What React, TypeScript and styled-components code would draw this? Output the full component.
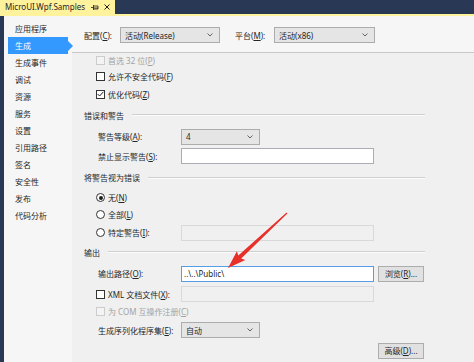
import React from "react";
import styled, { createGlobalStyle, css } from "styled-components";

const Global = createGlobalStyle`
  html, body { margin: 0; padding: 0; background: #293955; }
  body {
    font-family: "Noto Sans", "Noto Sans CJK SC", sans-serif;
    font-size: 8px;
    color: #262626;
  }
  * { box-sizing: border-box; }
`;

const Frame = styled.div`
  position: relative;
  width: 474px;
  height: 362px;
  overflow: hidden;
  background: #293955;
  display: flex;
  flex-direction: column;
`;

const TabStrip = styled.div`
  height: 14px;
  flex-shrink: 0;
  display: flex;
`;

const DocTab = styled.div`
  width: 115px;
  background: #fff29d;
  display: flex;
  align-items: center;
  padding-left: 5px;
  gap: 5px;
`;

const TabTitle = styled.span`
  flex: 1;
  white-space: nowrap;
  font-size: 8px;
  line-height: 14px;
  color: #262626;
`;

const TabIcons = styled.div`
  display: flex;
  align-items: center;
  gap: 5px;
  padding-right: 5px;
`;

const Accent = styled.div`
  height: 2px;
  flex-shrink: 0;
  background: #fff29d;
`;

const Body = styled.div`
  flex: 1;
  min-height: 0;
  display: flex;
  padding-left: 4px;
`;

const Sidebar = styled.nav`
  width: 68px;
  flex-shrink: 0;
  background: #f6f6f6;
  padding: 4px 0 0 4px;
  display: flex;
  flex-direction: column;
`;

const NavItem = styled.div<{ $active?: boolean }>`
  position: relative;
  height: 17px;
  width: 60px;
  display: flex;
  align-items: center;
  padding-left: 7px;
  white-space: nowrap;
  color: #262626;
  ${(p) =>
    p.$active &&
    css`
      background: #3399ff;
      color: #ffffff;
      &::after {
        content: "";
        position: absolute;
        right: -5px;
        top: 50%;
        margin-top: -5px;
        border-left: 5px solid #3399ff;
        border-top: 5px solid transparent;
        border-bottom: 5px solid transparent;
      }
    `}
`;

const Main = styled.main`
  flex: 1;
  min-width: 0;
  background: #f0f0f0;
  display: flex;
  flex-direction: column;
`;

const Header = styled.div`
  height: 37px;
  flex-shrink: 0;
  background: #f6f6f6;
  border-bottom: 1px solid #c9c9c9;
  display: flex;
  align-items: center;
  padding: 2px 0 0 12px;
`;

const Label = styled.span<{ $w?: number; $ml?: number; $disabled?: boolean }>`
  display: inline-block;
  flex-shrink: 0;
  white-space: nowrap;
  width: ${(p) => (p.$w ? `${p.$w}px` : "auto")};
  margin-left: ${(p) => p.$ml ?? 0}px;
  color: ${(p) => (p.$disabled ? "#a3a3a3" : "#262626")};
`;

const U = styled.u`
  text-decoration: underline;
  text-underline-offset: 1px;
`;

const Combo = styled.div<{ $w: number }>`
  width: ${(p) => p.$w}px;
  height: 16px;
  flex-shrink: 0;
  background: #e5e5e5;
  border: 1px solid #acacac;
  display: flex;
  align-items: center;
  justify-content: space-between;
  padding: 0 6px 0 4px;
  white-space: nowrap;
`;

const Content = styled.div`
  width: 353px;
  padding-left: 12px;
  display: flex;
  flex-direction: column;
`;

const Row = styled.div<{ $h: number; $indent?: number }>`
  height: ${(p) => p.$h}px;
  flex-shrink: 0;
  display: flex;
  align-items: center;
  padding-left: ${(p) => p.$indent ?? 0}px;
`;

const EndRow = styled(Row)`
  justify-content: flex-end;
  padding-right: 1px;
`;

const GroupTitle = styled.span`
  white-space: nowrap;
  color: #262626;
`;

const GroupRule = styled.div`
  flex: 1;
  height: 2px;
  margin-left: 8px;
  border-top: 1px solid #cfcfcf;
  border-bottom: 1px solid #fbfbfb;
`;

const Box = styled.span<{ $disabled?: boolean }>`
  width: 9px;
  height: 9px;
  flex-shrink: 0;
  background: ${(p) => (p.$disabled ? "#f4f4f4" : "#ffffff")};
  border: 1px solid ${(p) => (p.$disabled ? "#cccccc" : "#333333")};
  display: flex;
  align-items: center;
  justify-content: center;
  margin-right: 3px;
`;

const Radio = styled.span<{ $on?: boolean }>`
  width: 9px;
  height: 9px;
  flex-shrink: 0;
  border-radius: 50%;
  background: #ffffff;
  border: 1px solid #333333;
  display: flex;
  align-items: center;
  justify-content: center;
  margin-right: 3px;
  &::after {
    content: "";
    width: 4px;
    height: 4px;
    border-radius: 50%;
    background: ${(p) => (p.$on ? "#1e1e1e" : "transparent")};
  }
`;

const OptionLabel = styled.span<{ $w?: number }>`
  display: flex;
  align-items: center;
  flex-shrink: 0;
  width: ${(p) => (p.$w ? `${p.$w}px` : "auto")};
  white-space: nowrap;
`;

const TextBox = styled.div<{ $state?: "normal" | "focused" | "disabled" }>`
  width: 193px;
  height: 16px;
  flex-shrink: 0;
  display: flex;
  align-items: center;
  padding-left: 2px;
  white-space: nowrap;
  background: ${(p) => (p.$state === "disabled" ? "#f0f0f0" : "#ffffff")};
  border: 1px solid
    ${(p) =>
      p.$state === "focused"
        ? "#569de5"
        : p.$state === "disabled"
        ? "#d9d9d9"
        : "#abadb3"};
`;

const Button = styled.div`
  width: 46px;
  height: 16px;
  margin-left: 4px;
  flex-shrink: 0;
  background: #e1e1e1;
  border: 1px solid #adadad;
  display: flex;
  align-items: center;
  justify-content: center;
  white-space: nowrap;
`;

const Overlay = styled.svg`
  position: absolute;
  left: 0;
  top: 0;
  pointer-events: none;
`;

const Chevron = () => (
  <svg width="6" height="4" viewBox="0 0 6 4">
    <polyline points="0.5,0.5 3,3 5.5,0.5" fill="none" stroke="#555" strokeWidth="0.9" />
  </svg>
);

const Check = () => (
  <svg width="7" height="6" viewBox="0 0 7 6">
    <polyline points="0.6,3 2.6,5 6.4,0.8" fill="none" stroke="#1e1e1e" strokeWidth="1" />
  </svg>
);

const PinIcon = () => (
  <svg width="8" height="7" viewBox="0 0 8 7">
    <path d="M0 3.5H2.5 M2.5 1V6 M2.5 2H7V5H2.5 M2.5 4H7" fill="none" stroke="#1e1e1e" strokeWidth="0.8" />
  </svg>
);

const CloseIcon = () => (
  <svg width="6" height="6" viewBox="0 0 6 6">
    <path d="M0.5 0.5L5.5 5.5 M5.5 0.5L0.5 5.5" fill="none" stroke="#1e1e1e" strokeWidth="1" />
  </svg>
);

const navItems = [
  "应用程序",
  "生成",
  "生成事件",
  "调试",
  "资源",
  "服务",
  "设置",
  "引用路径",
  "签名",
  "安全性",
  "发布",
  "代码分析",
];

export default function App() {
  return (
    <>
      <Global />
      <Frame>
        <TabStrip>
          <DocTab>
            <TabTitle>MicroUI.Wpf.Samples</TabTitle>
            <TabIcons>
              <PinIcon />
              <CloseIcon />
            </TabIcons>
          </DocTab>
        </TabStrip>
        <Accent />
        <Body>
          <Sidebar>
            {navItems.map((n) => (
              <NavItem key={n} $active={n === "生成"}>
                {n}
              </NavItem>
            ))}
          </Sidebar>
          <Main>
            <Header>
              <Label $w={36}>
                配置(<U>C</U>):
              </Label>
              <Combo $w={100}>
                <span>活动(Release)</span>
                <Chevron />
              </Combo>
              <Label $w={39} $ml={15}>
                平台(<U>M</U>):
              </Label>
              <Combo $w={101}>
                <span>活动(x86)</span>
                <Chevron />
              </Combo>
            </Header>
            <Content>
              <Row $h={15} $indent={12}>
                <OptionLabel>
                  <Box $disabled />
                  <Label $disabled>
                    首选 32 位(<U>P</U>)
                  </Label>
                </OptionLabel>
              </Row>
              <Row $h={17} $indent={12}>
                <OptionLabel>
                  <Box />
                  <Label>
                    允许不安全代码(<U>F</U>)
                  </Label>
                </OptionLabel>
              </Row>
              <Row $h={18} $indent={12}>
                <OptionLabel>
                  <Box>
                    <Check />
                  </Box>
                  <Label>
                    优化代码(<U>Z</U>)
                  </Label>
                </OptionLabel>
              </Row>

              <Row $h={24}>
                <GroupTitle>错误和警告</GroupTitle>
                <GroupRule />
              </Row>
              <Row $h={19} $indent={14}>
                <Label $w={83}>
                  警告等级(<U>A</U>):
                </Label>
                <Combo $w={79}>
                  <span>4</span>
                  <Chevron />
                </Combo>
              </Row>
              <Row $h={20} $indent={14}>
                <Label $w={83}>
                  禁止显示警告(<U>S</U>):
                </Label>
                <TextBox />
              </Row>

              <Row $h={23}>
                <GroupTitle>将警告视为错误</GroupTitle>
                <GroupRule />
              </Row>
              <Row $h={17} $indent={12}>
                <OptionLabel>
                  <Radio $on />
                  <Label>
                    无(<U>N</U>)
                  </Label>
                </OptionLabel>
              </Row>
              <Row $h={17} $indent={12}>
                <OptionLabel>
                  <Radio />
                  <Label>
                    全部(<U>L</U>)
                  </Label>
                </OptionLabel>
              </Row>
              <Row $h={19} $indent={12}>
                <OptionLabel $w={85}>
                  <Radio />
                  <Label>
                    特定警告(<U>I</U>):
                  </Label>
                </OptionLabel>
                <TextBox $state="disabled" />
              </Row>

              <Row $h={20}>
                <GroupTitle>输出</GroupTitle>
                <GroupRule />
              </Row>
              <Row $h={23} $indent={14}>
                <Label $w={83}>
                  输出路径(<U>O</U>):
                </Label>
                <TextBox $state="focused">..\..\Public\</TextBox>
                <Button>
                  浏览(<U>R</U>)...
                </Button>
              </Row>
              <Row $h={18} $indent={12}>
                <OptionLabel $w={85}>
                  <Box />
                  <Label>
                    XML 文档文件(<U>X</U>):
                  </Label>
                </OptionLabel>
                <TextBox $state="disabled" />
              </Row>
              <Row $h={16} $indent={12}>
                <OptionLabel>
                  <Box $disabled />
                  <Label $disabled>
                    为 COM 互操作注册(<U>C</U>)
                  </Label>
                </OptionLabel>
              </Row>
              <Row $h={22} $indent={14}>
                <Label $w={83}>
                  生成序列化程序集(<U>E</U>):
                </Label>
                <Combo $w={79}>
                  <span>自动</span>
                  <Chevron />
                </Combo>
              </Row>
              <EndRow $h={19}>
                <Button>
                  高级(<U>D</U>)...
                </Button>
              </EndRow>
            </Content>
          </Main>
        </Body>
        <Overlay width="474" height="362" viewBox="0 0 474 362">
          <polygon
            points="286.6,212.5 238.3,255.6 236.9,251.2 228,268 245.3,260.1 241.2,258.6 287.4,213.5"
            fill="#e8302a"
          />
        </Overlay>
      </Frame>
    </>
  );
}
